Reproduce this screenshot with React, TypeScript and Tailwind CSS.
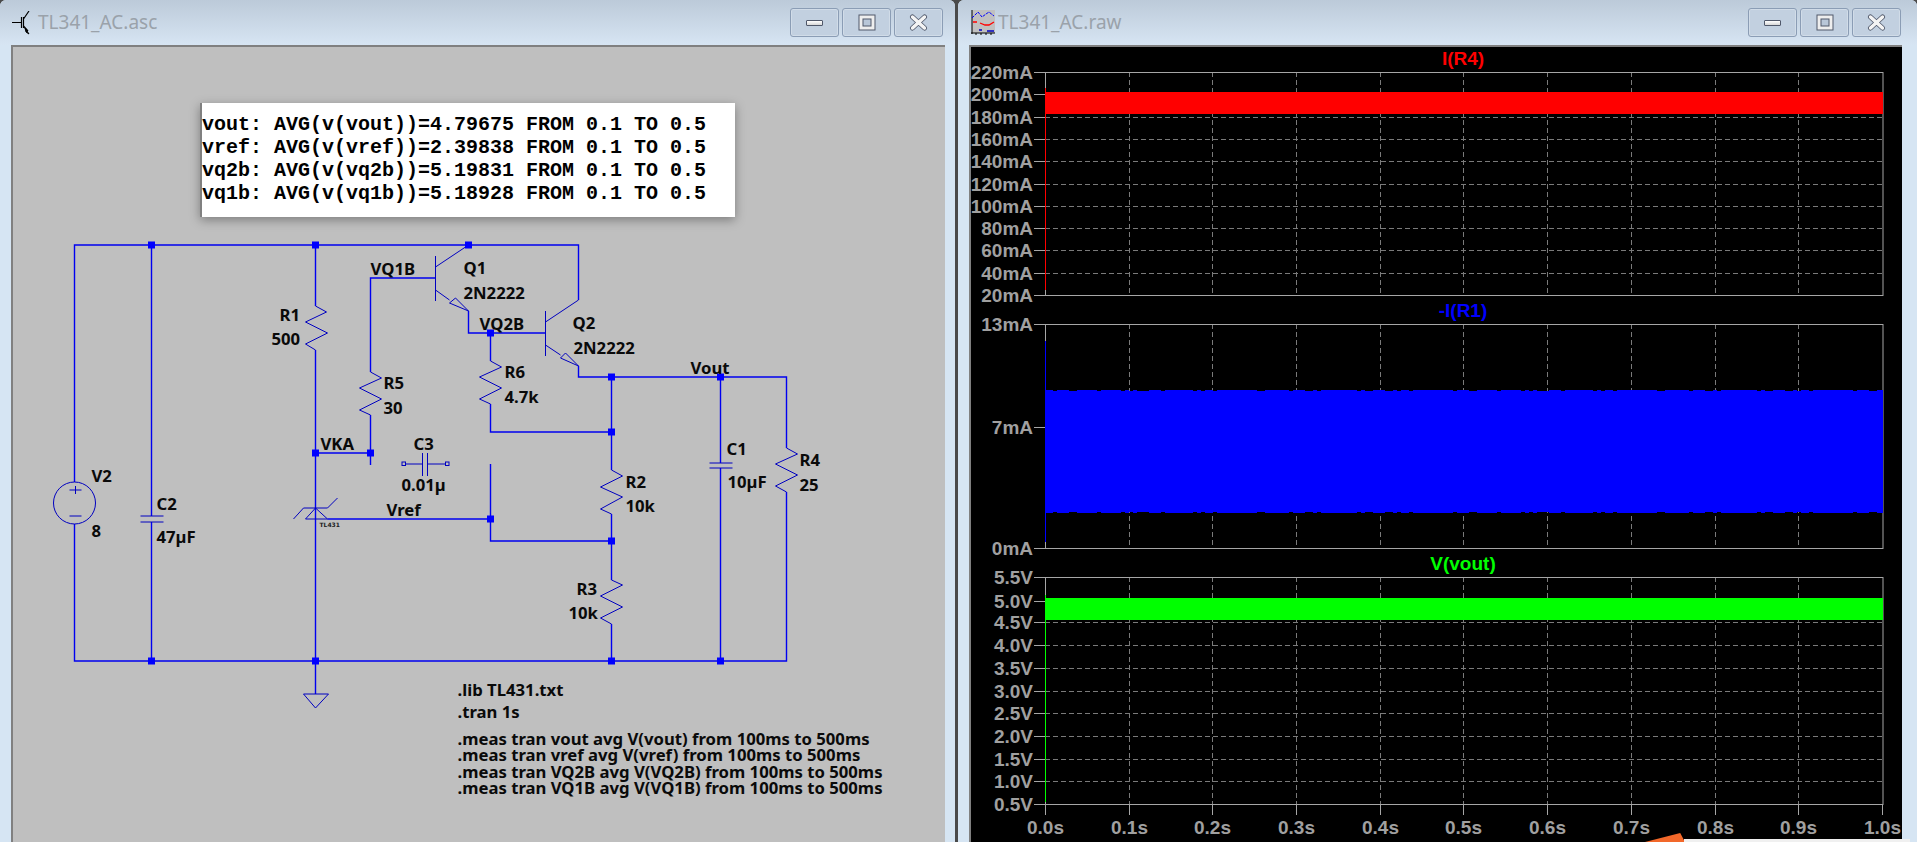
import React from "react";

const WIRE = "#0000f0";
const SYM = "#0000c0";

const wires: string[] = [
  "M74 482V245H578V300",
  "M74 524V661H786V492",
  "M151 245V516",
  "M151 522V661",
  "M315 245V306",
  "M315 350V661",
  "M315 453H370",
  "M370 465V415",
  "M370 372V278H435",
  "M468 311V333H545",
  "M578 366V377H786V448",
  "M490 333V361",
  "M490 404V432H611",
  "M611 377V470",
  "M611 514V580",
  "M611 624V661",
  "M720 377V463",
  "M720 468V661",
  "M490 464V541H611",
  "M327 519H490",
  "M315 661V694",
];

const symbols: string[] = [
  "M315 306L326 312L305 322L327 333L305 344L315 350",
  "M370 372L381 378L359 388L381 399L359 410L370 415",
  "M490 361L501 367L479 377L501 388L479 399L490 404",
  "M611 470L622 476L600 487L622 497L600 509L611 514",
  "M611 580L622 585L600 596L622 607L600 618L611 624",
  "M786 448L797 454L775 464L797 475L775 486L786 492",
  "M140 516H163M140 522H163",
  "M709 463H732M709 468H732",
  "M435 256V301M435 267L468 245M435 290L449 300",
  "M468 311L449 303L455 298Z",
  "M545 311V356M545 322L578 300M545 345L560 355",
  "M578 366L560 358L565 353Z",
  "M69 490H81M75 486V494M69 516H81",
  "M303 694H328L315 708Z",
  "M305 519H327L315 508ZM293 519L303 508H327L337 498",
  "M405 464H422M422 453V476M427 453V476M427 464H445",
];

const nodes: [number, number][] = [
  [151, 245], [315, 245], [468, 245], [151, 661], [315, 661], [611, 661], [720, 661],
  [315, 453], [370, 453], [490, 333], [611, 377], [720, 377], [611, 432], [490, 519], [611, 541],
];

const labels: [string, number, number][] = [
  ["V2", 91, 482], ["8", 91, 537], ["C2", 156, 510], ["47µF", 156, 543],
  ["R1", 279, 321], ["500", 271, 345], ["VQ1B", 370, 275], ["Q1", 463, 274],
  ["2N2222", 463, 299], ["R5", 383, 389], ["30", 383, 414], ["VKA", 320, 450],
  ["C3", 413, 450], ["0.01µ", 401, 491], ["Vref", 386, 516], ["VQ2B", 479, 330],
  ["Q2", 572, 329], ["2N2222", 573, 354], ["R6", 504, 378], ["4.7k", 504, 403],
  ["Vout", 690, 374], ["C1", 726, 455], ["10µF", 727, 488], ["R4", 799, 466],
  ["25", 799, 491], ["R2", 625, 488], ["10k", 625, 512], ["R3", 576, 595],
  ["10k", 568, 619], [".lib TL431.txt", 457, 696], [".tran 1s", 457, 718],
  [".meas tran vout avg V(vout) from 100ms to 500ms", 457, 745],
  [".meas tran vref avg V(vref) from 100ms to 500ms", 457, 761],
  [".meas tran VQ2B avg V(VQ2B) from 100ms to 500ms", 457, 778],
  [".meas tran VQ1B avg V(VQ1B) from 100ms to 500ms", 457, 794],
];

const measures = [
  "vout: AVG(v(vout))=4.79675 FROM 0.1 TO 0.5",
  "vref: AVG(v(vref))=2.39838 FROM 0.1 TO 0.5",
  "vq2b: AVG(v(vq2b))=5.19831 FROM 0.1 TO 0.5",
  "vq1b: AVG(v(vq1b))=5.18928 FROM 0.1 TO 0.5",
];

function Schematic() {
  return (
    <svg viewBox="13 47 931 795" className="block w-full h-full" fill="none">
      {wires.map((d) => <path key={d} d={d} stroke={WIRE} strokeWidth={1.4} />)}
      {symbols.map((d) => <path key={d} d={d} stroke={SYM} strokeWidth={1} />)}
      <circle cx={74} cy={503} r={21} stroke={SYM} strokeWidth={1} />
      {nodes.map(([x, y]) => <rect key={`${x}-${y}`} x={x - 3.5} y={y - 3.5} width={7} height={7} fill="#0000ff" />)}
      <rect x={401.5} y={462} width={3.5} height={3.5} stroke={SYM} />
      <rect x={445} y={462} width={3.5} height={3.5} stroke={SYM} />
      {labels.map(([t, x, y]) => (
        <text key={`${t}-${x}-${y}`} x={x} y={y} fill="#0a0a0a" className="font-['Noto_Sans'] text-[16.7px] font-bold">{t}</text>
      ))}
      <text x={319} y={527} fill="#222222" className="font-['DejaVu_Sans'] text-[6px] font-bold">TL431</text>
    </svg>
  );
}

const vGrid = [1129, 1212, 1296, 1380, 1463, 1547, 1631, 1715, 1798];

function jitter(x0: number, x1: number, y: number, dir: number) {
  let d = `M${x0} ${y}`;
  let seed = 7;
  for (let x = x0; x < x1; x += 4) {
    seed = (seed * 73 + 41) % 101;
    d += `H${x}V${y - dir * (seed % 4 === 0 ? 0 : 1)}`;
  }
  return d + `H${x1}V${y}Z`;
}

type PlotProps = {
  top: number;
  bottom: number;
  ticks: [string, number][];
  dashed: number[];
  color: string;
  band: [number, number];
  thin: [number, number];
  title: string;
  titleY: number;
  noisy?: boolean;
};

function Plot({ top, bottom, ticks, dashed, color, band, thin, title, titleY, noisy }: PlotProps) {
  return (
    <g>
      <text x={1463} y={titleY} fill={color} textAnchor="middle" className="font-['Liberation_Sans'] text-[19px] font-bold">{title}</text>
      {vGrid.map((x) => <path key={x} d={`M${x + 0.5} ${top}V${bottom}`} stroke="#7a7a7a" strokeDasharray="5 3" />)}
      {dashed.map((y) => <path key={y} d={`M1045 ${y + 0.5}H1883`} stroke="#7a7a7a" strokeDasharray="5 3" />)}
      <rect x={1045.5} y={top + 0.5} width={837.5} height={bottom - top} stroke="#a6a6a6" fill="none" />
      {ticks.map(([t, y]) => (
        <g key={t}>
          <path d={`M1034 ${y + 0.5}H1045`} stroke="#a6a6a6" />
          <text x={1033} y={y + 7} textAnchor="end" fill="#a0a0a0" className="font-['Liberation_Sans'] text-[19px] font-bold">{t}</text>
        </g>
      ))}
      <rect x={1045} y={band[0]} width={838} height={band[1] - band[0]} fill={color} />
      {noisy && <path d={jitter(1045, 1883, band[0], 1)} fill={color} />}
      {noisy && <path d={jitter(1045, 1883, band[1], -1)} fill={color} />}
      <path d={`M1045.5 ${thin[0]}V${thin[1]}`} stroke={color} />
    </g>
  );
}

function Waveforms() {
  return (
    <svg viewBox="971 47 931 795" className="block w-full h-full" fill="none">
      <Plot
        top={72} bottom={295} color="#ff0000" band={[92, 114]} thin={[88, 290]} title="I(R4)" titleY={65}
        dashed={[117, 139, 161, 184, 206, 228, 250, 273]}
        ticks={[["220mA", 72], ["200mA", 94], ["180mA", 117], ["160mA", 139], ["140mA", 161], ["120mA", 184], ["100mA", 206], ["80mA", 228], ["60mA", 250], ["40mA", 273], ["20mA", 295]]}
      />
      <Plot
        top={324} bottom={548} color="#0000ff" band={[391, 512]} thin={[341, 542]} title="-I(R1)" titleY={317} noisy
        dashed={[]}
        ticks={[["13mA", 324], ["7mA", 427], ["0mA", 548]]}
      />
      <Plot
        top={577} bottom={804} color="#00ff00" band={[598, 620]} thin={[595, 802]} title="V(vout)" titleY={570}
        dashed={[622, 645, 668, 691, 713, 736, 759, 781]}
        ticks={[["5.5V", 577], ["5.0V", 601], ["4.5V", 622], ["4.0V", 645], ["3.5V", 668], ["3.0V", 691], ["2.5V", 713], ["2.0V", 736], ["1.5V", 759], ["1.0V", 781], ["0.5V", 804]]}
      />
      {[1045, ...vGrid, 1882].map((x, i) => (
        <g key={x}>
          <path d={`M${x + 0.5} 804V815`} stroke="#a6a6a6" />
          <text x={x + 0.5} y={834} textAnchor="middle" fill="#a0a0a0" className="font-['Liberation_Sans'] text-[19px] font-bold">{`${(i / 10).toFixed(1)}s`}</text>
        </g>
      ))}
    </svg>
  );
}

function WinButton({ children }: { children: React.ReactNode }) {
  return (
    <button className="flex h-[29px] w-[49px] items-center justify-center rounded-[3px] border border-[#8b9db5] bg-[#c2d0e0] shadow-[inset_0_0_0_1px_rgba(255,255,255,0.25)]">
      {children}
    </button>
  );
}

function WinControls() {
  return (
    <div className="mr-[2px] flex gap-[3px]">
      <WinButton>
        <span className="block h-[6px] w-[17px] rounded-[1px] border border-[#50586a] bg-gradient-to-b from-white to-[#d8d8d8]" />
      </WinButton>
      <WinButton>
        <svg width="18" height="17" viewBox="0 0 18 17">
          <rect x="1" y="1" width="16" height="15" fill="#eeeeee" stroke="#50586a" />
          <rect x="5" y="5" width="8" height="7" fill="#b9c7d8" stroke="#50586a" />
        </svg>
      </WinButton>
      <WinButton>
        <svg width="19" height="17" viewBox="0 0 19 17">
          <path d="M3.5 3L15.5 14M15.5 3L3.5 14" stroke="#50586a" strokeWidth="5" strokeLinecap="round" fill="none" />
          <path d="M3.5 3L15.5 14M15.5 3L3.5 14" stroke="#f4f4f4" strokeWidth="3.4" strokeLinecap="round" fill="none" />
        </svg>
      </WinButton>
    </div>
  );
}

export default function App() {
  return (
    <div className="flex h-[842px] w-[1917px] overflow-hidden bg-[#4a4a4a]">
      <section className="flex h-full w-[955px] shrink-0 flex-col overflow-hidden rounded-t-[6px] bg-[#d6e5f3]">
        <header className="flex h-[45px] shrink-0 items-center justify-between bg-gradient-to-b from-[#bccad9] to-[#d7e5f3] pr-[10px] pl-[12px]">
          <div className="flex items-center">
            <svg width="18" height="24" viewBox="0 0 18 24" fill="none">
              <path d="M0 11.5H9M9.5 6V17M11.5 6V17M11.5 8L17 0M11.5 15L16 20" stroke="#000000" strokeWidth="1.2" />
              <path d="M13 17L17 23L14 21Z" fill="#000000" stroke="#000000" />
            </svg>
            <span className="ml-[8px] font-['Noto_Sans'] text-[19px] leading-none text-[#9aa2aa]">TL341_AC.asc</span>
          </div>
          <WinControls />
        </header>
        <div className="mr-[10px] ml-[11px] min-h-0 flex-1 border-t-2 border-l-2 border-t-[#808080] border-l-[#808080] bg-[#bfbfbf]">
          <div className="relative h-full w-full">
            <Schematic />
            <div className="absolute top-[56px] left-[187px] h-[114px] w-[535px] border-l-2 border-l-[#808080] bg-white pt-[10px] shadow-[0_3px_10px_rgba(0,0,0,0.35)]">
              {measures.map((m) => (
                <div key={m} className="h-[23px] whitespace-pre font-['Liberation_Mono'] text-[20px] leading-[23px] font-bold text-black">{m}</div>
              ))}
            </div>
          </div>
        </div>
      </section>

      <div className="w-[3px] shrink-0" />

      <section className="flex h-full min-w-0 flex-1 flex-col overflow-hidden rounded-t-[6px] bg-[#d6e5f3]">
        <header className="flex h-[45px] shrink-0 items-center justify-between bg-gradient-to-b from-[#bccad9] to-[#d7e5f3] pr-[14px] pl-[13px]">
          <div className="flex items-center">
            <svg width="24" height="25" viewBox="0 0 24 25" fill="none">
              <rect x="1" y="0" width="23" height="23" fill="#c0c0c0" />
              <path d="M1 0V24M0 23H24M5 23V25M10 23V25M15 23V25M20 23V25" stroke="#000000" />
              <path d="M1 8L7 2L11 7L15 4L18 2L23 6" stroke="#0000ff" strokeDasharray="3 1" />
              <path d="M2 12H6M9 13L14 15L18 15L23 12" stroke="#ff0000" strokeWidth="1.3" />
              <path d="M8 20H11M16 21H23" stroke="#0000c0" strokeWidth="1.3" />
            </svg>
            <span className="ml-[3px] font-['Noto_Sans'] text-[19px] leading-none text-[#9aa2aa]">TL341_AC.raw</span>
          </div>
          <WinControls />
        </header>
        <div className="mr-[15px] ml-[11px] min-h-0 flex-1 border-t-2 border-l-2 border-t-[#808080] border-l-[#808080] bg-black">
          <Waveforms />
        </div>
      </section>

      <div className="pointer-events-none absolute top-[833px] left-[1645px] h-[9px] w-[40px] bg-[#f2682a] [clip-path:polygon(0_100%,88%_0,100%_100%)]" />
      <div className="pointer-events-none absolute top-[839px] left-[1684px] h-[3px] w-[226px] bg-[#f0f0f0]" />
    </div>
  );
}
